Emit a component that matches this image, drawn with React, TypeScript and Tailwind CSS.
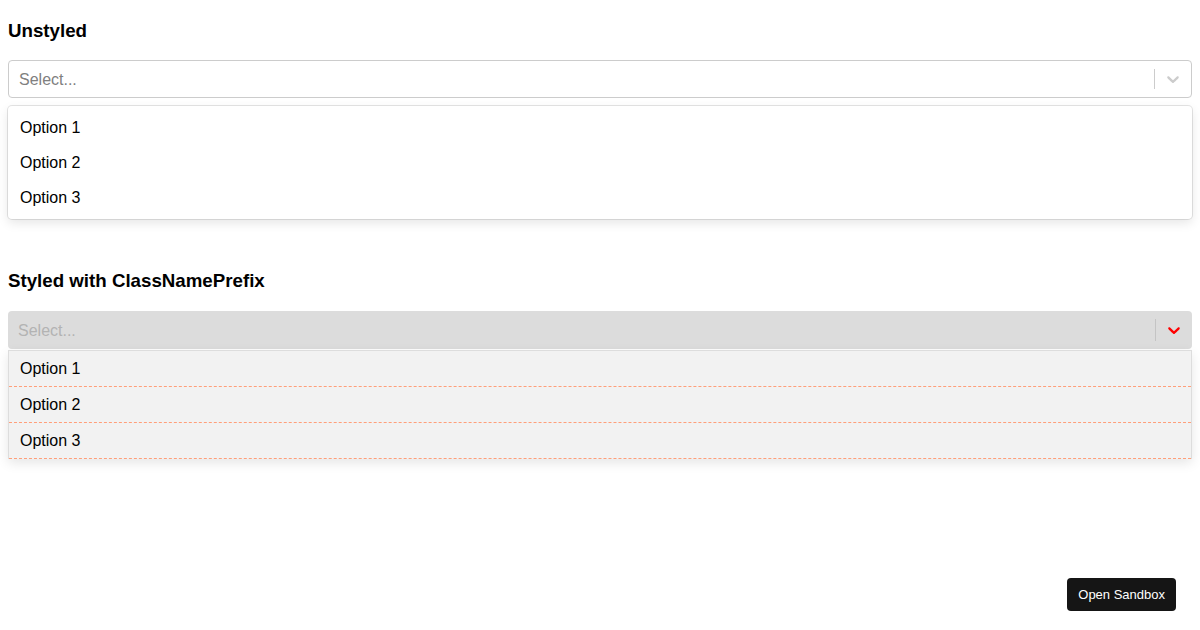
const OPTIONS = ['Option 1', 'Option 2', 'Option 3'];

function Chevron({ className }: { className: string }) {
  return (
    <svg viewBox="0 0 20 20" width="20" height="20" aria-hidden="true" className={className}>
      <path d="M4.516 7.548c0.436-0.446 1.043-0.481 1.576 0l3.908 3.747 3.908-3.747c0.533-0.481 1.141-0.446 1.574 0 0.436 0.445 0.408 1.197 0 1.615-0.406 0.418-4.695 4.502-4.695 4.502-0.217 0.223-0.502 0.335-0.787 0.335s-0.57-0.112-0.789-0.335c0 0-4.287-4.084-4.695-4.502s-0.436-1.17 0-1.615z" />
    </svg>
  );
}

function UnstyledSelect() {
  return (
    <div>
      <div className="flex h-[38px] items-center rounded border border-[#cccccc] bg-white">
        <div className="flex-1 px-2 pt-[2px]">
          <span className="ml-[2px] text-base text-[#808080]">Select...</span>
        </div>
        <div className="flex items-center self-stretch">
          <span className="my-2 w-px self-stretch bg-[#cccccc]" />
          <div className="p-2">
            <Chevron className="fill-[#cccccc]" />
          </div>
        </div>
      </div>
      <div className="mt-2 rounded bg-white py-1 shadow-[0_0_0_1px_rgba(0,0,0,0.1),0_4px_11px_rgba(0,0,0,0.1)]">
        {OPTIONS.map((opt) => (
          <div key={opt} className="px-3 py-2 text-base leading-[19px] text-black">
            {opt}
          </div>
        ))}
      </div>
    </div>
  );
}

function PrefixedSelect() {
  return (
    <div>
      <div className="flex h-[38px] items-center rounded bg-[#dcdcdc]">
        <div className="flex-1 px-2 pt-[2px]">
          <span className="ml-[2px] text-base text-[#b3b3b3]">Select...</span>
        </div>
        <div className="flex items-center self-stretch">
          <span className="my-2 w-px self-stretch bg-[#c4c4c4]" />
          <div className="p-2">
            <Chevron className="fill-[#ff0000]" />
          </div>
        </div>
      </div>
      <div className="mt-px border-x border-t border-x-[#dddddd] border-t-[#dddddd] bg-[#f2f2f2] shadow-[0_4px_11px_rgba(0,0,0,0.1)]">
        {OPTIONS.map((opt) => (
          <div
            key={opt}
            className="border-b border-dashed border-b-[#ff9f7a] py-2 pl-[11px] pr-3 text-base leading-[19px] text-black"
          >
            {opt}
          </div>
        ))}
      </div>
    </div>
  );
}

export default function App() {
  return (
    <div className="min-h-[630px] bg-white px-2 pt-[20px] font-['Liberation_Sans',Arial,sans-serif]">
      <h3 className="mb-[18px] text-[18.72px] font-bold leading-[22px] text-black">Unstyled</h3>
      <UnstyledSelect />

      <h3 className="mb-[19px] mt-[51px] text-[18.72px] font-bold leading-[22px] text-black">
        Styled with ClassNamePrefix
      </h3>
      <PrefixedSelect />

      <button className="fixed bottom-[19px] right-[24px] h-[33px] rounded bg-[#151515] px-[11px] text-[13px] text-white">
        Open Sandbox
      </button>
    </div>
  );
}
